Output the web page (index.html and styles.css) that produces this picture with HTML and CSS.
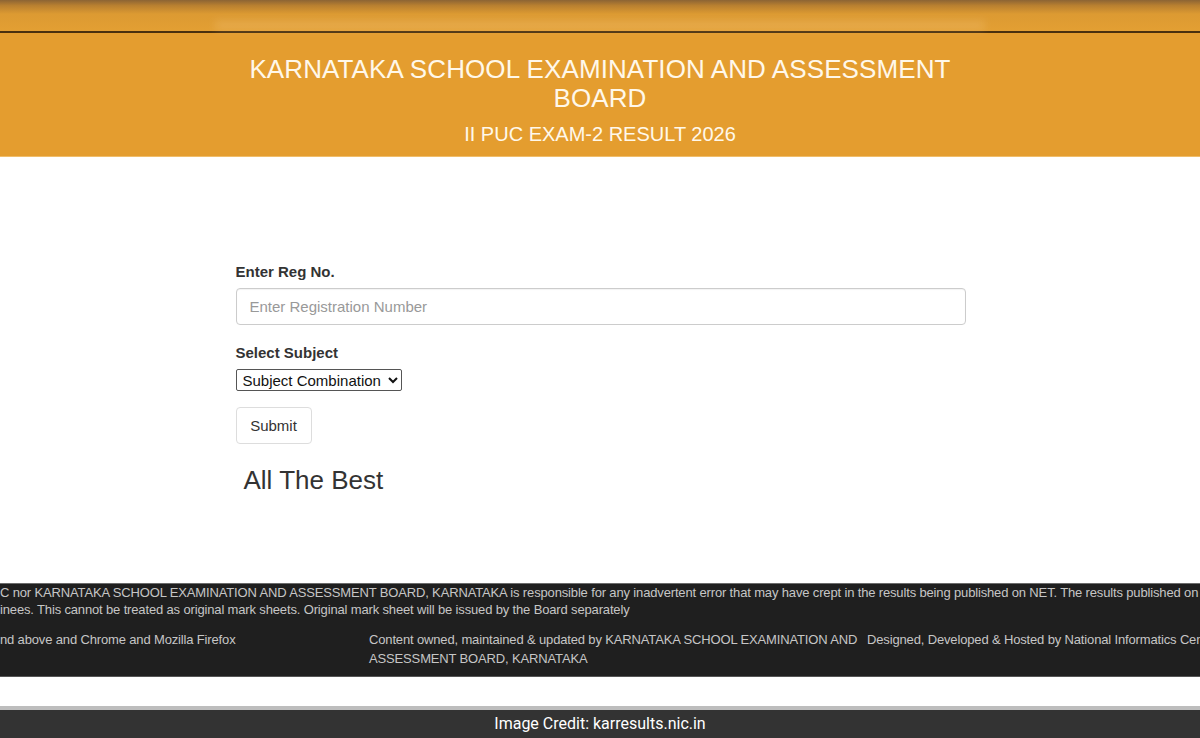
FILE: index.html
```html
<!DOCTYPE html>
<html lang="en">
<head>
    <meta charset="UTF-8">
    <meta name="viewport" content="width=device-width, initial-scale=1.0">
    <title>II PUC Exam-2 Result 2026</title>
    <link rel="stylesheet" href="styles.css">
</head>
<body>

    <div class="top-strip">
        <div class="top-glow"></div>
    </div>

    <header class="banner">
        <h1>KARNATAKA SCHOOL EXAMINATION AND ASSESSMENT BOARD</h1>
        <h2>II PUC EXAM-2 RESULT 2026</h2>
    </header>

    <main class="container">
        <form class="result-form" onsubmit="return false;">
            <label for="regno">Enter Reg No.</label>
            <input type="text" id="regno" class="reg-input" placeholder="Enter Registration Number">

            <label for="subject" class="label-select">Select Subject</label>
            <select id="subject" class="subject-select">
                <option>Subject Combination</option>
                <option>PCMB</option>
                <option>PCMC</option>
                <option>Commerce</option>
                <option>Arts</option>
            </select>

            <button type="submit" class="submit-btn">Submit</button>
        </form>
        <h3 class="best">All The Best</h3>
    </main>

    <footer class="footer">
        <div class="disclaimer">
            <div class="line">C nor KARNATAKA SCHOOL EXAMINATION AND ASSESSMENT BOARD, KARNATAKA is responsible for any inadvertent error that may have crept in the results being published on NET. The results published on net are for immediate information to the examinees.</div>
            <div class="line">inees. This cannot be treated as original mark sheets. Original mark sheet will be issued by the Board separately</div>
        </div>
        <div class="footer-row">
            <div>nd above and Chrome and Mozilla Firefox</div>
            <div>Content owned, maintained &amp; updated by KARNATAKA SCHOOL EXAMINATION AND<br>ASSESSMENT BOARD, KARNATAKA</div>
            <div class="nowrap">Designed, Developed &amp; Hosted by National Informatics Centre</div>
        </div>
    </footer>

    <div class="credit">Image Credit: karresults.nic.in</div>

</body>
</html>
```

FILE: styles.css
```css
body {
    font-family: "Liberation Sans", Arial, sans-serif;
    background-color: #ffffff;
    color: #333;
    margin: 0;
    min-height: 100vh;
    display: flex;
    flex-direction: column;
    overflow: hidden;
}

/* top strip above the banner */
.top-strip {
    height: 31px;
    background: linear-gradient(to bottom, #8c6434 0%, #b98030 18%, #dc9a32 45%, #e39f33 100%);
    display: flex;
    justify-content: center;
    align-items: flex-end;
    border-bottom: 2px solid #4a300e;
}

.top-glow {
    width: 770px;
    height: 9px;
    margin-bottom: 1px;
    background-color: rgba(255, 225, 180, 0.2);
    filter: blur(4px);
}

.banner {
    background-color: #e49d2f;
    color: #fff8ea;
    text-align: center;
    padding: 22px 0 10px;
    border-bottom: 1px solid #f0bd6a;
}

.banner h1 {
    max-width: 730px;
    margin: 0 auto;
    font-size: 26px;
    line-height: 29px;
    font-weight: normal;
    letter-spacing: 0.1px;
}

.banner h2 {
    margin: 10px 0 0;
    font-size: 20px;
    line-height: 23px;
    font-weight: normal;
}

.container {
    flex: 1;
    width: 731px;
    margin: 0 auto;
    padding: 105px 0 0 1px;
    box-sizing: border-box;
}

.result-form {
    display: flex;
    flex-direction: column;
    align-items: flex-start;
}

.result-form label {
    font-size: 15px;
    line-height: 20px;
    font-weight: bold;
    color: #333;
    margin-bottom: 6px;
}

.reg-input {
    width: 100%;
    box-sizing: border-box;
    height: 37px;
    padding: 6px 13px;
    font-family: inherit;
    font-size: 15px;
    color: #555;
    border: 1px solid #ccc;
    border-radius: 4px;
    box-shadow: inset 0 1px 1px rgba(0, 0, 0, 0.05);
}

.reg-input::placeholder {
    color: #999;
}

.label-select {
    margin-top: 18px;
}

.subject-select {
    height: 22px;
    font-family: inherit;
    font-size: 15px;
    color: #111;
    background-color: #fff;
    border: 1px solid #555;
    border-radius: 2px;
    padding: 0 3px 0 2px;
}

.submit-btn {
    margin-top: 16px;
    width: 76px;
    height: 37px;
    font-family: inherit;
    font-size: 15px;
    color: #333;
    background-color: #fff;
    border: 1px solid #ddd;
    border-radius: 4px;
}

.best {
    margin: 21px 0 0 8px;
    font-size: 26px;
    font-weight: normal;
    color: #333;
}

.footer {
    background-color: #1f1f1f;
    color: #c6c6c6;
    font-size: 13px;
    letter-spacing: -0.15px;
    border-top: 1px solid #6b6b6b;
    border-bottom: 1px solid #555;
    padding-bottom: 8px;
    overflow: hidden;
}

.disclaimer .line {
    white-space: nowrap;
    line-height: 17px;
}

.footer-row {
    display: grid;
    grid-template-columns: 369px 498px 1fr;
    line-height: 19px;
    margin-top: 12px;
}

.nowrap {
    white-space: nowrap;
}

.credit {
    margin-top: 29px;
    height: 28px;
    line-height: 28px;
    background-color: #333;
    border-top: 4px solid #bdbdbd;
    color: #fff;
    text-align: center;
    font-family: Roboto, sans-serif;
    font-size: 16px;
}
```
